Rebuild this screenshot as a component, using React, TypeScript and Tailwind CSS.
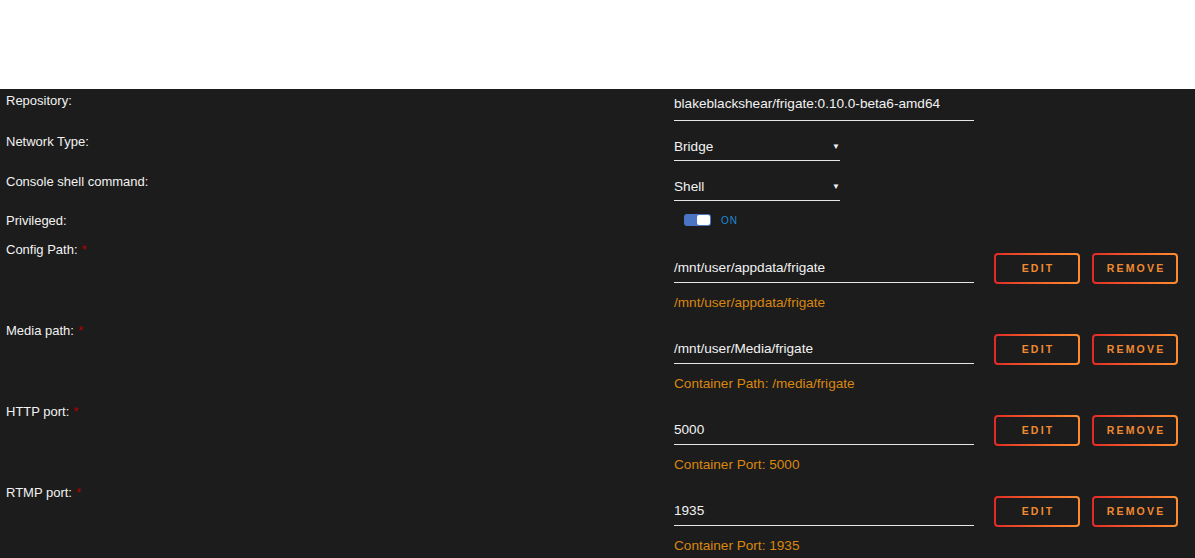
import React from "react";

const font = { fontFamily: '"Liberation Sans", Arial, sans-serif' };

function Label({ text, required }: { text: string; required?: boolean }) {
  return (
    <div className="w-[674px] shrink-0 pl-[6px] pt-[4px] text-[13px] leading-4 text-[#f2f2f2]">
      {text}
      {required && <span className="ml-[4px] text-[#b30000]">*</span>}
    </div>
  );
}

function GradientButton({ text }: { text: string }) {
  return (
    <div className="h-[31px] w-[86px] rounded-[4px] bg-gradient-to-r from-[#e22828] to-[#ff8c2f] p-[2px]">
      <div className="flex h-full w-full items-center justify-center rounded-[2px] bg-[#1c1c1c] pl-[2px] text-[10.5px] font-bold tracking-[2.2px] text-[#f08a32]">
        {text}
      </div>
    </div>
  );
}

function Select({ value }: { value: string }) {
  return (
    <div className="flex w-[166px] items-center justify-between border-b border-[#e6e6e6] pb-[5px] pt-[9px] text-[13.6px] leading-4 text-[#f2f2f2]">
      <span>{value}</span>
      <span className="text-[8px] leading-none">▼</span>
    </div>
  );
}

function MappingRow({
  label,
  value,
  help,
}: {
  label: string;
  value: string;
  help: string;
}) {
  return (
    <div className="flex h-[81px] items-start">
      <Label text={label} required />
      <div className="flex items-start">
        <div className="w-[300px] pt-[22px]">
          <div className="border-b border-[#e6e6e6] pb-[6px] text-[13.6px] leading-4 text-[#f2f2f2]">
            {value}
          </div>
          <div className="mt-[12px] text-[13.6px] leading-4 text-[#d9870f]">{help}</div>
        </div>
        <div className="ml-[20px] mt-[15px] flex gap-[12px]">
          <GradientButton text="EDIT" />
          <GradientButton text="REMOVE" />
        </div>
      </div>
    </div>
  );
}

export default function App() {
  return (
    <div className="h-[558px] w-full overflow-hidden bg-white" style={font}>
      <div className="h-[89px] bg-white" />
      <div className="h-[469px] bg-[#1c1c1c]">
        <div className="flex h-[41px] items-start">
          <Label text="Repository:" />
          <div className="w-[300px] pt-[7px]">
            <div className="border-b border-[#e6e6e6] pb-[8px] text-[13.6px] leading-4 text-[#f2f2f2]">
              blakeblackshear/frigate:0.10.0-beta6-amd64
            </div>
          </div>
        </div>
        <div className="flex h-[40px] items-start">
          <Label text="Network Type:" />
          <Select value="Bridge" />
        </div>
        <div className="flex h-[39px] items-start">
          <Label text="Console shell command:" />
          <Select value="Shell" />
        </div>
        <div className="flex h-[29px] items-start">
          <Label text="Privileged:" />
          <div className="flex h-[17px] items-center pl-[10px] pt-[5px]">
            <div className="flex h-[12px] w-[27px] items-center justify-end rounded-[3px] bg-[#4c74c4] p-[1px]">
              <div className="h-[10px] w-[13px] rounded-[2px] bg-white" />
            </div>
            <span className="ml-[10px] text-[10px] tracking-[1px] text-[#1f8ad0]">ON</span>
          </div>
        </div>
        <MappingRow label="Config Path:" value="/mnt/user/appdata/frigate" help="/mnt/user/appdata/frigate" />
        <MappingRow label="Media path:" value="/mnt/user/Media/frigate" help="Container Path: /media/frigate" />
        <MappingRow label="HTTP port:" value="5000" help="Container Port: 5000" />
        <MappingRow label="RTMP port:" value="1935" help="Container Port: 1935" />
      </div>
    </div>
  );
}
